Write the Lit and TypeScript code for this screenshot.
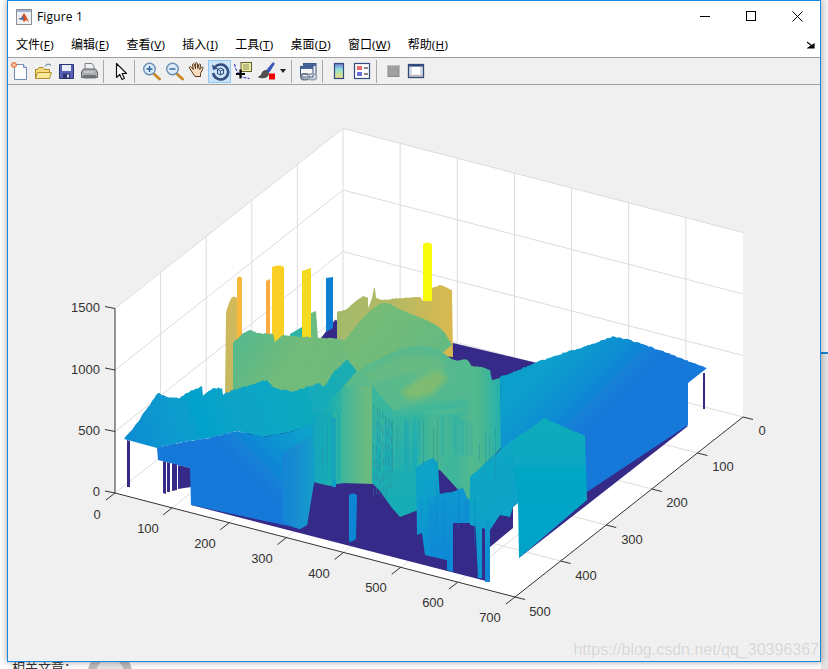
import { LitElement, html, css, svg } from "lit";
import { customElement } from "lit/decorators.js";

type P = [number, number];
interface Layer { top: P[]; base: P[]; g: [number, number, number, number, string[]]; jag?: number; round?: boolean; blur?: boolean; }

function rng(seed: number) {
  let s = seed;
  return () => { s = (s * 16807) % 2147483647; return s / 2147483647; };
}
function chaikin(a: P[]): P[] {
  const out: P[] = [a[0]];
  for (let i = 0; i < a.length - 1; i++) {
    const p = a[i], q = a[i + 1];
    out.push([p[0] * 0.75 + q[0] * 0.25, p[1] * 0.75 + q[1] * 0.25], [p[0] * 0.25 + q[0] * 0.75, p[1] * 0.25 + q[1] * 0.75]);
  }
  out.push(a[a.length - 1]);
  return out;
}
function jag(pts: P[], amp: number, seed: number): P[] {
  if (!amp) return pts;
  const r = rng(seed + 7), out: P[] = [];
  for (let i = 0; i < pts.length - 1; i++) {
    const [a, b] = [pts[i], pts[i + 1]];
    const n = Math.max(1, Math.round(Math.abs(b[0] - a[0]) / 2));
    for (let k = 0; k < n; k++) {
      const t = k / n;
      out.push([a[0] + (b[0] - a[0]) * t, a[1] + (b[1] - a[1]) * t + (k ? (r() - 0.5) * amp : 0)]);
    }
  }
  out.push(pts[pts.length - 1]);
  return out;
}
const PUR = "#352a87";
const flat = (c: string): [number, number, number, number, string[]] => [0, 0, 1, 0, [c, c]];
const LAYERS: Layer[] = [
  { top: [[191, 505], [335, 320], [453, 343], [537, 363], [688, 426]], base: [[519, 558], [519, 502], [513, 507], [513, 528], [490, 547], [490, 582], [191, 505]], g: flat(PUR) },
  // tall spikes behind
  { top: [[423, 244], [427, 242], [432, 244]], base: [[432, 304], [423, 304]], g: flat("#f9fb0e"), round: true },
  { top: [[237, 278], [240, 276], [242, 278]], base: [[242, 340], [237, 340]], g: flat("#fbb93a"), round: true },
  { top: [[266, 281], [270, 279]], base: [[270, 340], [266, 340]], g: flat("#f6ad3c") },
  { top: [[272, 267], [279, 265], [284, 267]], base: [[284, 340], [272, 342]], g: flat("#fbd026"), round: true },
  { top: [[302, 271], [311, 268]], base: [[311, 340], [302, 340]], g: flat("#f5da22") },
  { top: [[326, 278], [333, 277]], base: [[333, 328], [326, 332]], g: flat("#1180d6") },
  { top: [[290, 334], [302, 327]], base: [[302, 340], [290, 340]], g: flat("#2fb5a7") },
  { top: [[311, 313], [316, 311]], base: [[318, 340], [311, 340]], g: flat("#6cbb7f") },
  // khaki back-left column
  { top: [[226, 312], [230, 300], [233, 296], [237, 298]], base: [[237, 395], [225, 396]], g: [0, 300, 0, 400, ["#d3b95a", "#c3b963"]], round: true },
  // gold back right block
  { top: [[337, 312], [345, 310], [363, 296], [368, 298], [368, 308], [372, 298], [374, 288], [375, 288], [376, 298], [383, 300], [400, 298], [420, 297], [423, 301], [432, 301], [432, 288], [440, 285], [452, 290]], base: [[453, 357], [337, 345]], g: [337, 0, 452, 0, ["#a3b96c", "#b5b964", "#d9b94f"]], jag: 1 },
  // back plateau
  { top: [[345, 340], [362, 318], [383, 300], [400, 310], [440, 325], [452, 345]], base: [[433, 360], [377, 370], [345, 392]], g: [345, 300, 440, 370, ["#79bb75", "#70bb7a", "#62ba84"]], jag: 0.5, round: true },
  // green left block
  { top: [[233, 343], [243, 333], [250, 330], [257, 333], [273, 334], [275, 342], [283, 335], [293, 336], [303, 337], [333, 338], [345, 340]], base: [[350, 400], [300, 420], [233, 420]], g: [233, 330, 345, 400, ["#52b890", "#72bb79", "#6dba7d"]], jag: 1.2 },
  // columns, left of the big roof
  { top: [[300, 400], [342, 375]], base: [[345, 483], [337, 484], [330, 486], [313, 482], [300, 420]], g: [305, 0, 345, 0, ["#0d9fcb", "#15a9b9", "#1dafb0", "#38b59e"]] },
  // green columns
  { top: [[342, 385], [358, 372], [374, 380]], base: [[374, 484], [342, 483]], g: [342, 0, 374, 0, ["#3cb69c", "#52b890", "#67ba82", "#6cbb7f"]] },
  // right columns of centre
  { top: [[416, 405], [452, 405], [472, 400]], base: [[472, 505], [440, 470], [416, 470]], g: [416, 0, 472, 0, ["#2fb4a4", "#49b792", "#3cb69c", "#52b890"]] },
  // striped middle
  { top: [[372, 384], [393, 408], [418, 410]], base: [[418, 510], [408, 514], [400, 517], [392, 508], [380, 491], [372, 483]], g: [0, 400, 0, 510, ["#3ab79c", "#20afb0", "#17abb6"]], jag: 0.5 },
  // far-right green
  { top: [[470, 366], [482, 367], [490, 370], [492, 380], [500, 378]], base: [[502, 447], [470, 480]], g: [470, 0, 502, 0, ["#55b98d", "#4cb890", "#36b5a0", "#22b0ac"]], jag: 0.6 },
  // roof
  { top: [[342, 386], [358, 370], [400, 348], [425, 345], [440, 350], [455, 362], [467, 358], [472, 367]], base: [[472, 405], [452, 414], [393, 411], [373, 386]], g: [360, 360, 470, 410, ["#5cb98a", "#58b98c", "#50b890"]], round: true, jag: 0.4 },
  { top: [[362, 376], [400, 356], [435, 356], [448, 368]], base: [[430, 372], [395, 376], [372, 384]], g: flat("#66ba83"), blur: true },
  { top: [[400, 392], [422, 376], [438, 370], [448, 378]], base: [[432, 394], [412, 400]], g: flat("#7fbc72"), blur: true },
  { top: [[395, 410], [430, 403], [468, 400]], base: [[468, 408], [395, 416]], g: flat("#3fb79a"), blur: true },
  // blue plateau
  { top: [[124, 439], [132, 430], [158, 393], [167, 397], [180, 398], [187, 393], [202, 386], [203, 396], [213, 388], [222, 388], [223, 395], [233, 390], [267, 380], [273, 387], [292, 392], [320, 383], [323, 390], [333, 373], [347, 359], [357, 371]], base: [[344, 386], [326, 405], [312, 424], [290, 432], [263, 437], [237, 431], [210, 438], [183, 442], [157, 448]], g: [124, 440, 345, 375, ["#0d8cd3", "#06a1cb", "#08a6c4", "#1cadb2"]], jag: 1.8 },
  // dark legs
  { top: [[127, 440], [130, 441]], base: [[130, 487], [127, 487]], g: flat(PUR) },
  { top: [[163, 461], [166, 462]], base: [[166, 494], [163, 493]], g: flat(PUR) },
  { top: [[167, 462], [170, 463]], base: [[170, 492], [167, 492]], g: flat(PUR) },
  { top: [[172, 463], [177, 464]], base: [[177, 490], [172, 491]], g: flat(PUR) },
  { top: [[178, 465], [191, 468]], base: [[191, 487], [178, 489]], g: flat(PUR) },
  // blue lower block
  { top: [[157, 448], [183, 442], [210, 438], [237, 431], [263, 437], [290, 432], [312, 424]], base: [[314, 482], [307, 525], [300, 529], [293, 527], [191, 505], [190, 468], [158, 460]], g: [300, 425, 250, 472, ["#07a2ca", "#0e8fd2", "#1578d9"]], jag: 0.8 },
  { top: [[282, 455], [296, 445], [312, 435]], base: [[314, 482], [307, 525], [300, 529], [293, 527], [282, 520]], g: [282, 0, 312, 0, ["#1584d5", "#1a8dd0", "#129ccb"]] },
  // floor blob
  { top: [[349, 495], [353, 493], [357, 495]], base: [[356, 539], [353, 541], [349, 542]], g: flat("#0f85d5"), round: true },
  { top: [[332, 418], [336, 418]], base: [[336, 487], [332, 487]], g: flat("#0f9fc5") },
  // right plateau
  { top: [[500, 377], [518, 370], [537, 362], [567, 352], [590, 345], [613, 336], [637, 342], [667, 353], [707, 368]], base: [[688, 383], [688, 425], [587, 492], [501, 450]], g: [560, 350, 640, 430, ["#079fcb", "#0e8fd2", "#1578d9", "#1578d9"]], jag: 1.6 },
  { top: [[703, 373], [705, 373]], base: [[705, 409], [703, 409]], g: flat(PUR) },
  // right pile
  { top: [[416, 468], [424, 462], [433, 458], [438, 463]], base: [[440, 500], [447, 560], [425, 555], [422, 533], [417, 535]], g: [0, 460, 0, 540, ["#07a3c8", "#08a0ca", "#1092d4"]], jag: 1 },
  { top: [[438, 494], [452, 492], [463, 488], [467, 498], [470, 500]], base: [[470, 523], [453, 523], [453, 572], [447, 570], [447, 560], [430, 556], [430, 500]], g: [0, 490, 0, 560, ["#0b97d0", "#1188d6"]], jag: 1 },
  // right mass
  { top: [[470, 477], [502, 448], [510, 442]], base: [[519, 502], [513, 507], [510, 517], [500, 515], [490, 530], [470, 525]], g: [470, 450, 510, 520, ["#0ba7c2", "#07a2c9"]], jag: 0.8 },
  { top: [[475, 515], [482, 515]], base: [[482, 578], [478, 578]], g: [0, 510, 0, 580, ["#0aa2c6", "#1091d2"]] },
  { top: [[485, 520], [490, 520]], base: [[490, 582], [485, 582]], g: [0, 510, 0, 580, ["#07a3c8", "#1283d6"]] },
  // right block
  { top: [[510, 442], [545, 418], [563, 427], [585, 435]], base: [[587, 500], [519, 558], [518, 502]], g: [540, 418, 540, 520, ["#10acba", "#06a6c4", "#06a4c8"]], jag: 1 },
];

const pts = (a: P[]) => a.map((p) => p[0].toFixed(1) + "," + p[1].toFixed(1)).join(" ");
const lerp = (a: P, b: P, t: number): P => [a[0] + (b[0] - a[0]) * t, a[1] + (b[1] - a[1]) * t];
const O: P = [343, 313], L0: P = [115, 493], R0: P = [743, 417], F0: P = [515, 597];
const up = (p: P, h: number): P => [p[0], p[1] - h];
const Z = 61.5;

function gridLines() {
  const out: [P, P][] = [];
  for (let i = 1; i <= 4; i++) {
    const a = lerp(L0, O, i / 5);
    out.push([a, up(a, 3 * Z)]);
    out.push([a, [a[0] + (F0[0] - L0[0]), a[1] + (F0[1] - L0[1])]]);
  }
  for (let i = 1; i <= 6; i++) {
    const a = lerp(O, R0, i / 7);
    out.push([a, up(a, 3 * Z)]);
    out.push([a, lerp(L0, F0, i / 7)]);
  }
  for (let h = 1; h <= 2; h++) {
    out.push([up(L0, h * Z), up(O, h * Z)]);
    out.push([up(O, h * Z), up(R0, h * Z)]);
  }
  out.push([O, up(O, 3 * Z)], [up(O, 3 * Z), up(L0, 3 * Z)], [up(O, 3 * Z), up(R0, 3 * Z)], [O, L0], [O, R0]);
  return out;
}
const Z_LABELS: [string, number][] = [["1500", 312], ["1000", 374], ["500", 435], ["0", 496]];
const X_LABELS: [string, number, number][] = [["0", 97, 519], ["100", 148, 533], ["200", 205, 548], ["300", 262, 563], ["400", 319, 578], ["500", 376, 592], ["600", 433, 607], ["700", 490, 622]];
const Y_LABELS: [string, number, number][] = [["0", 762, 435], ["100", 723, 471], ["200", 677, 507], ["300", 632, 544], ["400", 586, 580], ["500", 540, 616]];

function stripes() {
  const r = rng(4242), out: { x: number; y1: number; y2: number; w: number; c: string; o: number }[] = [];
  for (let x = 313; x < 470; x += 4) {
    if (x > 342 && x < 372) continue;
    const y1 = x < 342 ? 412 : 416 + r() * 6;
    const y2 = x < 342 ? 480 : x < 416 ? 470 : 455;
    out.push({ x, y1, y2, w: 2 + r() * 2, c: r() > 0.5 ? "#0f9fc4" : "#5cb989", o: 0.12 + r() * 0.12 });
  }
  for (let x = 373; x < 392; x += 3) {
    for (let y = 404 + (x - 373); y < 490; y += 11 + r() * 5) {
      out.push({ x: x + r(), y1: y, y2: y + 6 + r() * 6, w: 0.8, c: "#3b7d96", o: 0.55 });
    }
  }
  for (const x of [392, 397, 405, 423, 433, 437]) {
    out.push({ x, y1: 418 + r() * 12, y2: 448 + r() * 25, w: 0.9, c: "#2f8f9e", o: 0.5 });
  }
  for (const x of [322, 327, 479, 485, 489, 495]) {
    out.push({ x, y1: 425 + r() * 25, y2: 460 + r() * 20, w: 0.9, c: "#2a8fa8", o: 0.5 });
  }
  for (const x of [421, 428, 436, 443, 458, 465, 474]) {
    out.push({ x, y1: 470 + r() * 35, y2: 518 + r() * 30, w: 1.2, c: "#0878c8", o: 0.35 });
  }
  return out;
}

const ICONS: Record<string, unknown> = {
  new: svg`<path d="M4.5 3.5h9l3 3v12h-12z" fill="#fff" stroke="#6d8db5"/><path d="M13.5 3.5v3h3" fill="#dbe6f3" stroke="#6d8db5"/><circle cx="4" cy="4" r="2.4" fill="#f6c9a2" stroke="#e2552a"/>`,
  open: svg`<path d="M2.5 17.5v-9h2l1.500-2h4l1.500 2h5v9z" fill="#f7dc7c" stroke="#a8862a"/><path d="M2.500 17.500l2-6h14l-2 6z" fill="#fbe89b" stroke="#b08f30"/><path d="M12 5.500c2-3 4-3 6-1" fill="none" stroke="#7b93ad" stroke-width="1.200"/>`,
  save: svg`<path d="M3.500 3.500h14v14h-14z" fill="#5561b5" stroke="#2c3470"/><rect x="6" y="4" width="9" height="6" fill="#e9ebf6"/><rect x="7" y="12.500" width="7" height="5" fill="#2c3470"/><rect x="11" y="13.500" width="2" height="3" fill="#d6d9ee"/>`,
  print: svg`<path d="M6 2.500h7l2 3v5h-9z" fill="#eef0f3" stroke="#7c8087"/><path d="M2.500 11l2-3h12l2 3v5.500h-16z" fill="#a9acb0" stroke="#5f6266"/><rect x="4" y="14" width="13" height="3.500" rx="1" fill="#6f7276"/><path d="M5 11h10" stroke="#dfe1e4"/>`,
  arrow: svg`<path d="M6.500 2.500v14l3.200-3 2.300 5 2.400-1.200-2.300-4.800h4.400z" fill="#fff" stroke="#111" stroke-width="1.200" stroke-linejoin="round"/>`,
  zin: svg`<path d="M12.500 12.500l6 5.500" stroke="#c98a2c" stroke-width="3" stroke-linecap="round"/><circle cx="8.500" cy="8" r="5.800" fill="#dcecf9" stroke="#6b8fb4" stroke-width="1.400"/><path d="M5.500 8h6M8.500 5v6" stroke="#2d5f95" stroke-width="1.400"/>`,
  zout: svg`<path d="M12.500 12.500l6 5.500" stroke="#c98a2c" stroke-width="3" stroke-linecap="round"/><circle cx="8.500" cy="8" r="5.800" fill="#dcecf9" stroke="#6b8fb4" stroke-width="1.400"/><path d="M5.500 8h6" stroke="#2d5f95" stroke-width="1.400"/>`,
  hand: svg`<path d="M5 11l-2.500-4c-.6-1.200 1-2 1.800-1l2 2.500L5.500 4c-.2-1.400 1.600-1.600 2-.4l1 4-.2-5c0-1.400 1.900-1.400 2 0l.5 5 1-4c.4-1.200 2-.8 1.800.5l-.9 4.400 1.700-2.200c.9-1 2.200 0 1.600 1.100l-2.500 5v3.100H8z" fill="#fbdcc0" stroke="#54391f" stroke-width="1"/>`,
  rotate: svg`<path d="M5 6a7.500 7.500 0 1 1-1.800 6" fill="none" stroke="#354f7e" stroke-width="2.600"/><path d="M2 3.500l1 5.500 5-1.500z" fill="#354f7e"/><path d="M7.500 8.500l3-1.500 3 1.500v4l-3 1.500-3-1.500z" fill="none" stroke="#354f7e" stroke-width="1.100"/><path d="M7.500 8.500l3 1.500 3-1.500M10.500 10v4" fill="none" stroke="#354f7e" stroke-width=".9"/>`,
  cursor: svg`<path d="M1.500 3c1 6 4 11 9 13.500l6 1" fill="none" stroke="#1e22c8" stroke-dasharray="3 1.200"/><rect x="8" y="1.500" width="10.500" height="9" fill="#f0eda2" stroke="#5c5c35"/><path d="M10 4h6M10 6h6M10 8h6" stroke="#77774a" stroke-width=".8"/><path d="M7.500 8.500v9M3 13h9" stroke="#000" stroke-width="2.200"/>`,
  brush: svg`<path d="M10 10l7-8.500 1.500 1.200L13 11.500z" fill="#3a57c2" stroke="#253a8a" stroke-width=".6"/><path d="M9.500 9.500c-3 0-3.500 3-4 4.500l-3 2c3 1.500 8 1 9.500-1.500 1-1.500.5-3.500-2.500-5z" fill="#55524e" stroke="#2c2a28" stroke-width=".7"/><rect x="13" y="12.500" width="6" height="6" fill="#f40000"/>`,
  link: svg`<rect x="5.500" y="2.500" width="12.500" height="11" fill="#f1f3f7" stroke="#35507f"/><rect x="5.500" y="2.500" width="12.500" height="2.500" fill="#44649a"/><rect x="2.500" y="5.500" width="12.500" height="10.500" fill="#f6f7fa" stroke="#35507f"/><rect x="2.500" y="5.500" width="12.500" height="2.500" fill="#44649a"/><rect x="3" y="13" width="8" height="5.500" rx="2.700" fill="none" stroke="#6e7c8e" stroke-width="1.800"/><rect x="10" y="13" width="8.500" height="5.500" rx="2.700" fill="none" stroke="#9aa7b5" stroke-width="1.800"/>`,
  cbar: svg`<defs><linearGradient id="cb" x1="0" y1="0" x2="0" y2="1"><stop offset="0" stop-color="#6f78c9"/><stop offset=".35" stop-color="#8fd8e4"/><stop offset=".6" stop-color="#b3e6a8"/><stop offset="1" stop-color="#f7d28c"/></linearGradient></defs><rect x="5.500" y="2.500" width="9" height="15" fill="url(#cb)" stroke="#2f4a7c" stroke-width="1.200"/>`,
  legend: svg`<rect x="2.500" y="2.500" width="15" height="15" fill="#fff" stroke="#2f4a7c" stroke-width="1.200"/><rect x="5" y="5" width="5" height="4" fill="#ec6b6b"/><rect x="5" y="11" width="5" height="4" fill="#6a6fe0"/><path d="M12 7h4M12 13h4" stroke="#111" stroke-width="1.200"/>`,
  hide: svg`<rect x="5" y="4.500" width="11" height="11" fill="#a0a0a0" stroke="#8a8a8a"/><path d="M5 4.500h11" stroke="#c0c0c0"/>`,
  prop: svg`<rect x="2.500" y="3.500" width="15" height="13" fill="#d5dbe8" stroke="#2f4a7c" stroke-width="1.300"/><rect x="2.500" y="3.500" width="15" height="2" fill="#2f4a7c"/><rect x="6" y="6" width="8" height="7.500" fill="#fff"/><rect x="3.500" y="14" width="13" height="2" fill="#b7b7b7"/>`,
};

const GROUPS: string[][] = [["new", "open", "save", "print"], ["arrow"], ["zin", "zout", "hand", "rotate", "cursor", "brush", "^"], ["link"], ["cbar", "legend"], ["hide", "prop"]];
const MENU: [string, string][] = [["文件", "F"], ["编辑", "E"], ["查看", "V"], ["插入", "I"], ["工具", "T"], ["桌面", "D"], ["窗口", "W"], ["帮助", "H"]];

@customElement("app-root")
export class AppRoot extends LitElement {
  static styles = css`
    :host { display: block; width: 828px; height: 669px; position: relative; overflow: hidden; background: #fff; font-family: "Noto Sans CJK SC", "Noto Sans", sans-serif; }
    .rstrip { position: absolute; right: 0; top: 0; width: 7px; height: 352px; background: #f4f4f4; border-bottom: 2px solid #1b87d8; }
    .rstrip2 { position: absolute; right: 0; top: 354px; width: 7px; height: 315px; background: #e4e4e4; }
    .related { position: absolute; left: 12px; top: 659px; font-size: 13px; line-height: 16px; color: #333; }
    .avatar { position: absolute; left: 88px; top: 651px; width: 28px; height: 28px; border: 8px solid #bbb; border-radius: 50%; background: #e6e6e6; }
    .win { position: relative; margin-left: 7px; width: 812px; height: 660px; border: 1px solid #1b87d8; display: flex; flex-direction: column; background: #f0f0f0; box-shadow: 0 0 7px rgba(0,0,0,.38); }
    .title { height: 31px; background: #fff; display: flex; align-items: center; padding-left: 8px; }
    .title .logo { width: 16px; height: 16px; display: block; }
    .title .name { margin-left: 5px; font: 12px/16px "Open Sans", sans-serif; color: #000; flex: 1; letter-spacing: .15px; }
    .ctrl { width: 46px; height: 31px; display: flex; align-items: center; justify-content: center; }
    .ctrl svg { display: block; }
    .menu { height: 25px; background: #fff; border-bottom: 1px solid #a0a0a0; display: flex; align-items: center; padding-left: 8px; gap: 17px; font-size: 12px; line-height: 16px; color: #000; position: relative; }
    .menu u { text-underline-offset: 1px; }
    .menu .latin { font-family: "Noto Sans", sans-serif; font-size: 11.500px; letter-spacing: .36px; }
    .corner { position: absolute; right: 5px; top: 9px; width: 8px; height: 8px; }
    .tools { height: 26px; border-bottom: 1px solid #a0a0a0; display: flex; align-items: center; background: #f0f0f0; }
    .grp { display: flex; align-items: center; }
    .sep { width: 1px; height: 23px; background: #a8a8a8; margin: 0 4px 0 3px; }
    .btn { width: 23px; height: 23px; display: flex; align-items: center; justify-content: center; box-sizing: border-box; }
    .btn svg { width: 20px; height: 20px; display: block; }
    .btn.on { background: #cce4f7; border: 1px solid #90c8f6; }
    .caret { width: 11px; height: 23px; display: flex; align-items: center; justify-content: center; }
    .caret i { display: block; border-left: 3px solid transparent; border-right: 3px solid transparent; border-top: 4px solid #222; }
    .plot { flex: 1; min-height: 0; position: relative; }
    .plot > svg { display: block; width: 812px; height: 576px; }
    .tick { font: 13px "Liberation Sans", sans-serif; fill: #333; }
    .mark { position: absolute; right: 1px; bottom: 2px; font: 16px/18px "Liberation Sans", sans-serif; color: #d6d6d6; text-shadow: 0 0 1px #fff; }
  `;

  private toolbar() {
    return GROUPS.map((g, gi) => html`
      ${gi ? html`<span class="sep"></span>` : ""}
      <div class="grp">
        ${g.map((n) => n === "^"
          ? html`<span class="caret"><i></i></span>`
          : html`<span class="btn ${n === "rotate" ? "on" : ""}"><svg viewBox="0 0 20 20">${ICONS[n]}</svg></span>`)}
      </div>`);
  }

  private plot() {
    const axis: [P, P][] = [[up(L0, 3 * Z), L0], [L0, F0], [F0, R0]];
    const zt = [0, 1, 2, 3].map((h) => up(L0, h * Z));
    const xt = [0, 1, 2, 3, 4, 5, 6, 7].map((i) => lerp(L0, F0, i / 7));
    const yt = [0, 1, 2, 3, 4, 5].map((i) => lerp(R0, F0, i / 5));
    const outline = (l: Layer, i: number) => {
      const t = l.round ? chaikin(chaikin(l.top)) : l.top;
      return pts([...jag(t, l.jag || 0, i + 11), ...l.base]);
    };
    return svg`<svg viewBox="8 85 812 576">
      <defs>
        <filter id="soft" x="-2%" y="-2%" width="104%" height="104%"><feGaussianBlur stdDeviation="0.35"/></filter>
        <filter id="wide" x="-30%" y="-30%" width="160%" height="160%"><feGaussianBlur stdDeviation="2.5"/></filter>
        ${LAYERS.map((l, i) => {
          const [x1, y1, x2, y2, c] = l.g;
          return svg`<linearGradient id=${"g" + i} gradientUnits="userSpaceOnUse" x1=${x1} y1=${y1} x2=${x2} y2=${y2}>
            ${c.map((s, k) => svg`<stop offset=${k / Math.max(1, c.length - 1)} stop-color=${s}/>`)}
          </linearGradient>`;
        })}
      </defs>
      <polygon points=${pts([up(L0, 3 * Z), up(O, 3 * Z), up(R0, 3 * Z), R0, F0, L0])} fill="#fff"/>
      ${gridLines().map(([a, b]) => svg`<line x1=${a[0]} y1=${a[1]} x2=${b[0]} y2=${b[1]} stroke="#dcdcdc" stroke-width="1"/>`)}
      <g filter="url(#soft)">
        ${LAYERS.map((l, i) => svg`<polygon points=${outline(l, i)} fill=${"url(#g" + i + ")"} filter=${l.blur ? "url(#wide)" : "none"}/>`)}
        ${stripes().map((s) => svg`<rect x=${s.x} y=${s.y1} width=${s.w} height=${s.y2 - s.y1} fill=${s.c} opacity=${s.o}/>`)}
      </g>
      ${axis.map(([a, b]) => svg`<line x1=${a[0]} y1=${a[1]} x2=${b[0]} y2=${b[1]} stroke="#333" stroke-width="1"/>`)}
      ${zt.map((p) => svg`<line x1=${p[0] - 10} y1=${p[1] - 2} x2=${p[0]} y2=${p[1]} stroke="#333"/>`)}
      ${xt.map((p) => svg`<line x1=${p[0]} y1=${p[1]} x2=${p[0] - 9} y2=${p[1] + 7} stroke="#333"/>`)}
      ${yt.map((p) => svg`<line x1=${p[0]} y1=${p[1]} x2=${p[0] + 10} y2=${p[1] + 2.500} stroke="#333"/>`)}
      ${Z_LABELS.map(([t, y]) => svg`<text class="tick" x="100" y=${y} text-anchor="end">${t}</text>`)}
      ${X_LABELS.map(([t, x, y]) => svg`<text class="tick" x=${x} y=${y} text-anchor="middle">${t}</text>`)}
      ${Y_LABELS.map(([t, x, y]) => svg`<text class="tick" x=${x} y=${y} text-anchor="middle">${t}</text>`)}
    </svg>`;
  }

  render() {
    return html`
      <div class="rstrip"></div><div class="rstrip2"></div>
      <div class="avatar"></div>
      <div class="related">相关文章：</div>
      <div class="win">
        <div class="title">
          <svg class="logo" viewBox="0 0 16 16">
            <rect x=".5" y=".5" width="15" height="15" fill="#eef0f3" stroke="#8a8f96"/>
            <rect x="1" y="1" width="14" height="2" fill="#9fb4cc"/>
            <path d="M2 10l3-1 3-5 2 3 3 6-3-2-2 2-2-3z" fill="#d9541e"/>
            <path d="M2 10l3-1 2-2 1 3-2 1z" fill="#3d78b8"/>
          </svg>
          <span class="name">Figure 1</span>
          <span class="ctrl"><svg width="11" height="11" viewBox="0 0 11 11"><path d="M0 5.500h10" stroke="#000"/></svg></span>
          <span class="ctrl"><svg width="11" height="11" viewBox="0 0 11 11"><rect x=".5" y=".5" width="9" height="9" fill="none" stroke="#000"/></svg></span>
          <span class="ctrl"><svg width="11" height="11" viewBox="0 0 11 11"><path d="M.5.500l10 10M10.500.500l-10 10" stroke="#000"/></svg></span>
        </div>
        <div class="menu">
          ${MENU.map(([n, k]) => html`<span>${n}<span class="latin">(<u>${k}</u>)</span></span>`)}
          <svg class="corner" viewBox="0 0 8 8"><path d="M0 1l5 4M1 7h6V3z" stroke="#000" stroke-width="1.200" fill="#000"/></svg>
        </div>
        <div class="tools">${this.toolbar()}</div>
        <div class="plot">
          ${this.plot()}
          <div class="mark">https://blog.csdn.net/qq_30396367</div>
        </div>
      </div>
    `;
  }
}
